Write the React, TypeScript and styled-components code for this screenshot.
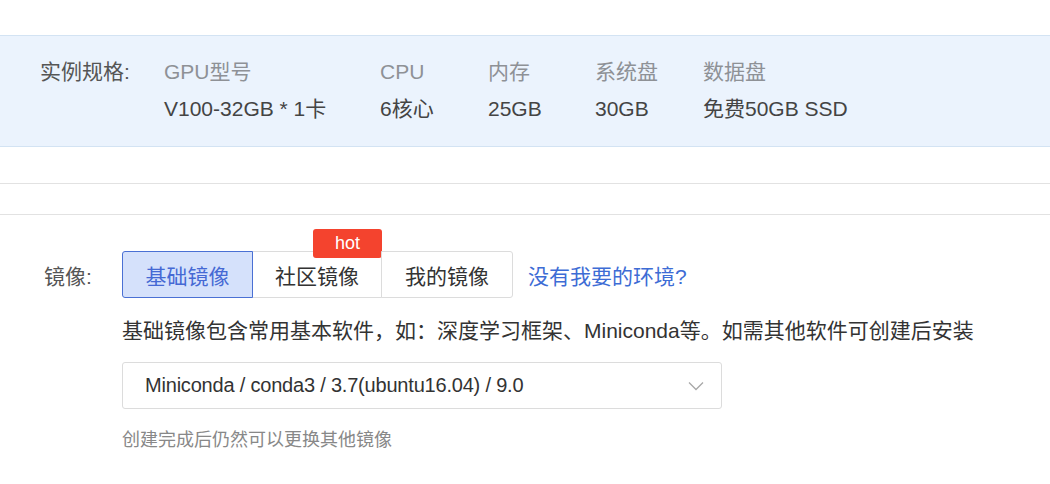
import React from 'react';
import styled, { createGlobalStyle } from 'styled-components';

const GlobalStyle = createGlobalStyle`
  body {
    margin: 0;
    background: #fff;
    font-family: "Liberation Sans", "Noto Sans CJK SC", sans-serif;
    color: #333;
  }
`;

const Page = styled.div`
  width: 1050px;
  padding-top: 35px;
`;

const SpecBand = styled.div`
  display: flex;
  padding: 23px 0 24px 40px;
  background: #ebf3fd;
  border-top: 1px solid #d3e3f3;
  border-bottom: 1px solid #d3e3f3;
`;

const SpecLabel = styled.div`
  width: 124px;
  font-size: 21px;
  line-height: 26px;
  color: #555;
`;

const SpecCol = styled.div<{ $width?: number }>`
  width: ${(p) => (p.$width ? `${p.$width}px` : 'auto')};
  display: flex;
  flex-direction: column;
  gap: 11px;
  font-size: 21px;
  line-height: 26px;
`;

const SpecHead = styled.span`
  color: #8e9196;
`;

const SpecValue = styled.span`
  color: #444;
`;

const Divider = styled.div<{ $top: number }>`
  margin-top: ${(p) => p.$top}px;
  border-top: 1px solid #e2e2e2;
`;

const Section = styled.div`
  padding: 36px 0 0 44px;
`;

const Row = styled.div`
  display: flex;
  align-items: center;
`;

const FieldLabel = styled.div`
  width: 78px;
  font-size: 21px;
  color: #555;
`;

const Tabs = styled.div`
  display: flex;
`;

const Tab = styled.div<{ $active?: boolean; $width: number }>`
  position: relative;
  box-sizing: border-box;
  width: ${(p) => p.$width}px;
  height: 47px;
  display: flex;
  align-items: center;
  justify-content: center;
  font-size: 21px;
  color: ${(p) => (p.$active ? '#4569d4' : '#333')};
  background: ${(p) => (p.$active ? '#d5e1fb' : '#fff')};
  border: 1px solid ${(p) => (p.$active ? '#4a70d4' : '#dcdcdc')};
  margin-left: ${(p) => (p.$active ? '0' : '-1px')};
  z-index: ${(p) => (p.$active ? 1 : 0)};
  &:first-child {
    border-radius: 3px 0 0 3px;
    margin-left: 0;
  }
  &:last-child {
    border-radius: 0 3px 3px 0;
  }
`;

const HotBadge = styled.span`
  position: absolute;
  top: -23px;
  right: -1px;
  width: 69px;
  height: 29px;
  display: flex;
  align-items: center;
  justify-content: center;
  background: #f4432e;
  color: #fff;
  font-size: 18px;
  border-radius: 3px;
`;

const Link = styled.a`
  margin-left: 15px;
  font-size: 21px;
  color: #3d6cd5;
  text-decoration: none;
`;

const Body = styled.div`
  padding-left: 78px;
`;

const Desc = styled.div`
  margin-top: 20px;
  font-size: 21px;
  line-height: 26px;
  color: #333;
`;

const Select = styled.div`
  box-sizing: border-box;
  margin-top: 18px;
  width: 600px;
  height: 47px;
  display: flex;
  align-items: center;
  justify-content: space-between;
  padding: 0 17px 0 22px;
  border: 1px solid #dcdcdc;
  border-radius: 3px;
  font-size: 20px;
  letter-spacing: -0.2px;
  color: #333;
`;

const Hint = styled.div`
  margin-top: 20px;
  font-size: 18px;
  line-height: 22px;
  color: #888;
`;

const specs = [
  { head: 'GPU型号', value: 'V100-32GB * 1卡', width: 216 },
  { head: 'CPU', value: '6核心', width: 108 },
  { head: '内存', value: '25GB', width: 107 },
  { head: '系统盘', value: '30GB', width: 108 },
  { head: '数据盘', value: '免费50GB SSD' },
];

const Chevron = () => (
  <svg width="16" height="10" viewBox="0 0 16 10" fill="none">
    <path d="M1 1.5 L8 8.5 L15 1.5" stroke="#a8a8a8" strokeWidth="1.3" />
  </svg>
);

export default function App() {
  return (
    <Page>
      <GlobalStyle />
      <SpecBand>
        <SpecLabel>实例规格:</SpecLabel>
        {specs.map((s) => (
          <SpecCol key={s.head} $width={s.width}>
            <SpecHead>{s.head}</SpecHead>
            <SpecValue>{s.value}</SpecValue>
          </SpecCol>
        ))}
      </SpecBand>
      <Divider $top={36} />
      <Divider $top={30} />
      <Section>
        <Row>
          <FieldLabel>镜像:</FieldLabel>
          <Tabs>
            <Tab $active $width={131}>基础镜像</Tab>
            <Tab $width={130}>
              社区镜像
              <HotBadge>hot</HotBadge>
            </Tab>
            <Tab $width={132}>我的镜像</Tab>
          </Tabs>
          <Link href="#">没有我要的环境?</Link>
        </Row>
        <Body>
          <Desc>基础镜像包含常用基本软件，如：深度学习框架、Miniconda等。如需其他软件可创建后安装</Desc>
          <Select>
            <span>Miniconda / conda3 / 3.7(ubuntu16.04) / 9.0</span>
            <Chevron />
          </Select>
          <Hint>创建完成后仍然可以更换其他镜像</Hint>
        </Body>
      </Section>
    </Page>
  );
}
